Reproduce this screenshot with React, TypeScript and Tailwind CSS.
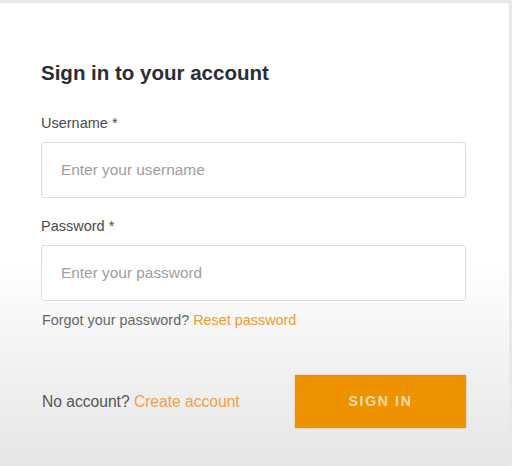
const font = { fontFamily: '"Liberation Sans", Arial, sans-serif' }

type FieldProps = {
  label: string
  placeholder: string
  type?: string
}

const Field = ({ label, placeholder, type = 'text' }: FieldProps) => {
  return (
    <div className="flex flex-col gap-[9px]">
      <label className="text-[14.5px] leading-5 text-[#4a4a4a]">{label} *</label>
      <input
        type={type}
        placeholder={placeholder}
        className="h-[56px] w-full rounded-[3px] border border-[#dcdcdc] bg-white px-[19px] text-[15.4px] text-[#333] outline-none placeholder:text-[#9e9e9e]"
      />
    </div>
  )
}

export default function App() {
  return (
    <div className="h-[466px] w-[512px] overflow-hidden bg-[#e8e8e8] pt-[3px]" style={font}>
      <div className="h-full w-[509px] rounded-tr-[3px] bg-gradient-to-b from-white via-white via-55% to-[#e6e6e6] pl-[41px] pr-[43px] pt-[58px]">
        <h1 className="text-[20.5px] font-bold leading-6 text-[#282d38]">Sign in to your account</h1>
        <div className="mt-[28px] flex flex-col gap-[18px]">
          <Field label="Username" placeholder="Enter your username" />
          <Field label="Password" placeholder="Enter your password" type="password" />
        </div>
        <p className="mt-[10px] pl-px text-[14.4px] leading-[18px] text-[#666]">
          Forgot your password? <span className="text-[#f09a2c]">Reset password</span>
        </p>
        <div className="mt-[46px] flex items-center justify-between">
          <p className="pl-px text-[15.6px] leading-5 text-[#555]">
            No account? <span className="text-[#eea04a]">Create account</span>
          </p>
          <button className="h-[53px] w-[171px] bg-[#ee9200] text-[14px] font-bold tracking-[0.12em] text-[#f8dcae] shadow-[0_0_2px_rgba(238,146,0,0.6)]">
            SIGN IN
          </button>
        </div>
      </div>
    </div>
  )
}
